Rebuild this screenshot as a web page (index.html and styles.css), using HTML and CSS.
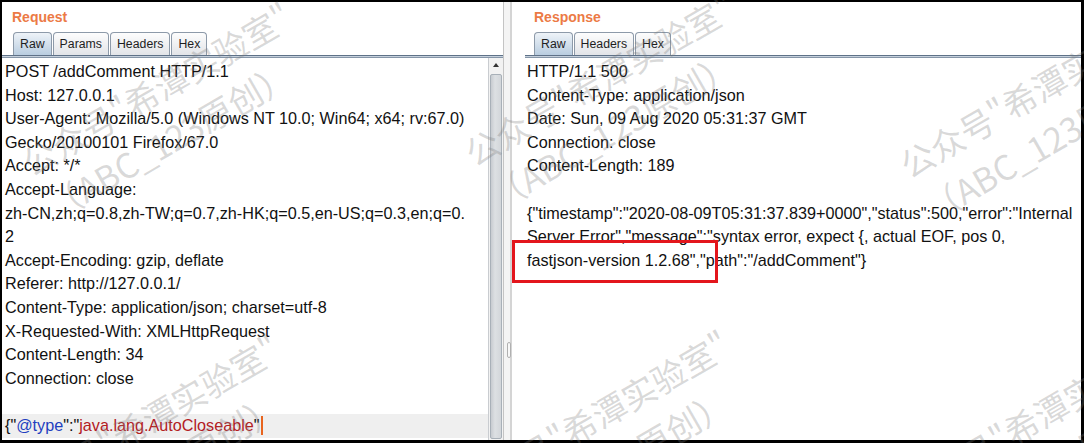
FILE: index.html
```html
<!DOCTYPE html>
<html lang="zh">
<head>
    <meta charset="UTF-8">
    <title>Burp Repeater - addComment</title>
    <link rel="stylesheet" href="styles.css">
</head>
<body>
    <div class="screen">
        <div class="panels">
            <div class="pane pane-req">
                <div class="pane-title">Request</div>
                <div class="tabs">
                    <span class="tab active">Raw</span>
                    <span class="tab">Params</span>
                    <span class="tab">Headers</span>
                    <span class="tab">Hex</span>
                </div>
                <div class="band"></div>
                <div class="editor">
                    <div class="text">
                        <div class="line">POST /addComment HTTP/1.1</div>
                        <div class="line">Host: 127.0.0.1</div>
                        <div class="line">User-Agent: Mozilla/5.0 (Windows NT 10.0; Win64; x64; rv:67.0)</div>
                        <div class="line">Gecko/20100101 Firefox/67.0</div>
                        <div class="line">Accept: */*</div>
                        <div class="line">Accept-Language:</div>
                        <div class="line">zh-CN,zh;q=0.8,zh-TW;q=0.7,zh-HK;q=0.5,en-US;q=0.3,en;q=0.</div>
                        <div class="line">2</div>
                        <div class="line">Accept-Encoding: gzip, deflate</div>
                        <div class="line">Referer: http://127.0.0.1/</div>
                        <div class="line">Content-Type: application/json; charset=utf-8</div>
                        <div class="line">X-Requested-With: XMLHttpRequest</div>
                        <div class="line">Content-Length: 34</div>
                        <div class="line">Connection: close</div>
                        <div class="line">&nbsp;</div>
                        <div class="line current">{"<span class="key">@type</span>":"<span class="val">java.lang.AutoCloseable</span>"<span class="caret"></span></div>
                    </div>
                    <div class="scrollbar">
                        <div class="arrow"></div>
                        <div class="thumb"></div>
                    </div>
                </div>
            </div>

            <div class="divider"><span class="grip"></span></div>

            <div class="pane pane-res">
                <div class="pane-title">Response</div>
                <div class="tabs">
                    <span class="tab active">Raw</span>
                    <span class="tab">Headers</span>
                    <span class="tab">Hex</span>
                </div>
                <div class="band"></div>
                <div class="editor">
                    <div class="text">
                        <div class="line">HTTP/1.1 500</div>
                        <div class="line">Content-Type: application/json</div>
                        <div class="line">Date: Sun, 09 Aug 2020 05:31:37 GMT</div>
                        <div class="line">Connection: close</div>
                        <div class="line">Content-Length: 189</div>
                        <div class="line">&nbsp;</div>
                        <div class="line">{"timestamp":"2020-08-09T05:31:37.839+0000","status":500,"error":"Internal</div>
                        <div class="line">Server Error","message":"syntax error, expect {, actual EOF, pos 0,</div>
                        <div class="line">fastjson-version 1.2.68","path":"/addComment"}</div>
                    </div>
                </div>
            </div>
        </div>

        <!-- highlight box drawn over the response -->
        <div class="redbox"></div>

        <!-- watermark tiles -->
        <div class="watermark wm-a"><span>公众号"希潭实验室"</span><span>（ABC_123原创）</span></div>
        <div class="watermark wm-b"><span>公众号"希潭实验室"</span><span>（ABC_123原创）</span></div>
        <div class="watermark wm-c"><span>公众号"希潭实验室"</span><span>（ABC_123原创）</span></div>
        <div class="watermark wm-d"><span>公众号"希潭实验室"</span><span>（ABC_123原创）</span></div>
        <div class="watermark wm-e"><span>公众号"希潭实验室"</span><span>（ABC_123原创）</span></div>
        <div class="watermark wm-f"><span>公众号"希潭实验室"</span><span>（ABC_123原创）</span></div>
    </div>
</body>
</html>
```

FILE: styles.css
```css
body {
    margin: 0;
    font-family: "Liberation Sans", Arial, sans-serif;
}

.screen {
    position: relative;
    width: 1084px;
    height: 443px;
    box-sizing: border-box;
    padding: 2px 3px 3px 2px;
    background: #000;
    overflow: hidden;
}

.panels {
    display: flex;
    height: 100%;
    background: #fff;
}

.pane {
    display: flex;
    flex-direction: column;
    min-width: 0;
}

.pane-req {
    width: 501px;
}

.pane-res {
    flex: 1;
    padding-left: 10px;
}

.pane-title {
    height: 30px;
    box-sizing: border-box;
    padding: 5px 0 0 10px;
    font-size: 14px;
    font-weight: bold;
    line-height: 20px;
    color: #ec7a45;
}

.pane-res .pane-title {
    padding-left: 9px;
}

.tabs {
    display: flex;
    gap: 1px;
    height: 23px;
    padding-left: 11px;
}

.pane-res .tabs {
    padding-left: 9px;
}

.tab {
    padding: 0 6px;
    border: 1px solid #8d9aa9;
    border-bottom: none;
    border-radius: 4px 4px 0 0;
    background: linear-gradient(#fdfdfd, #e2e4e8);
    font-size: 12.3px;
    line-height: 22px;
    color: #1e1e1e;
}

.tab.active {
    background: linear-gradient(#eef3f8, #b9cde0);
}

.band {
    height: 1px;
    border-top: 1px solid #5f7288;
    border-bottom: 1px solid #8696a8;
    background: #c5d0dc;
}

.editor {
    flex: 1;
    display: flex;
    min-height: 0;
}

.text {
    flex: 1;
    padding-top: 2px;
    font-size: 16.2px;
    line-height: 23.6px;
    color: #111;
    white-space: nowrap;
    overflow: hidden;
}

.line {
    padding-left: 3px;
}

.pane-res .line {
    padding-left: 2px;
}

.line.current {
    background: #efefef;
}

.key {
    color: #1f3fbf;
}

.val {
    color: #b3201f;
}

.caret {
    display: inline-block;
    width: 2px;
    height: 19px;
    margin-left: 1px;
    vertical-align: -4px;
    background: #e8641e;
}

.scrollbar {
    width: 14px;
    display: flex;
    flex-direction: column;
    border-left: 1px solid #c9ccd0;
    background: #f2f2f2;
}

.arrow {
    height: 14px;
    position: relative;
}

.arrow::after {
    content: "";
    position: absolute;
    left: 4px;
    top: 5px;
    border-left: 3px solid transparent;
    border-right: 3px solid transparent;
    border-bottom: 4px solid #333;
}

.thumb {
    flex: 1;
    margin: 2px 1px 1px 1px;
    border: 1px solid #a8b0b8;
    border-radius: 2px;
    background: linear-gradient(to right, #c7cbd0, #dde0e3 40%, #d2d6da);
}

.divider {
    width: 12px;
    position: relative;
    box-sizing: border-box;
    border-left: 1px solid #c4c4c4;
    border-right: 3px solid #fff;
    background: linear-gradient(to right, #f4f4f4 0, #f4f4f4 6px, #d4d4d4 6px, #d4d4d4 8px);
}

.grip {
    position: absolute;
    left: 3px;
    top: 340px;
    width: 2px;
    height: 14px;
    border: 1px solid #b0b0b0;
    border-radius: 2px;
    background: #f8f8f8;
}

.redbox {
    position: absolute;
    left: 512px;
    top: 240px;
    width: 206px;
    height: 43px;
    box-sizing: border-box;
    border: 3px solid #e3161c;
}

.watermark {
    position: absolute;
    display: flex;
    flex-direction: column;
    transform: rotate(-30deg);
    transform-origin: 0 0;
    font-family: "Noto Sans CJK SC", sans-serif;
    font-size: 34px;
    line-height: 50px;
    color: rgba(120, 120, 120, 0.28);
    white-space: nowrap;
    pointer-events: none;
}

.wm-a { left: 12px;  top: 144px; }
.wm-b { left: 455px; top: 134px; }
.wm-c { left: 890px; top: 146px; }
.wm-d { left: 0;     top: 476px; }
.wm-e { left: 450px; top: 472px; }
.wm-f { left: 892px; top: 472px; }
```
